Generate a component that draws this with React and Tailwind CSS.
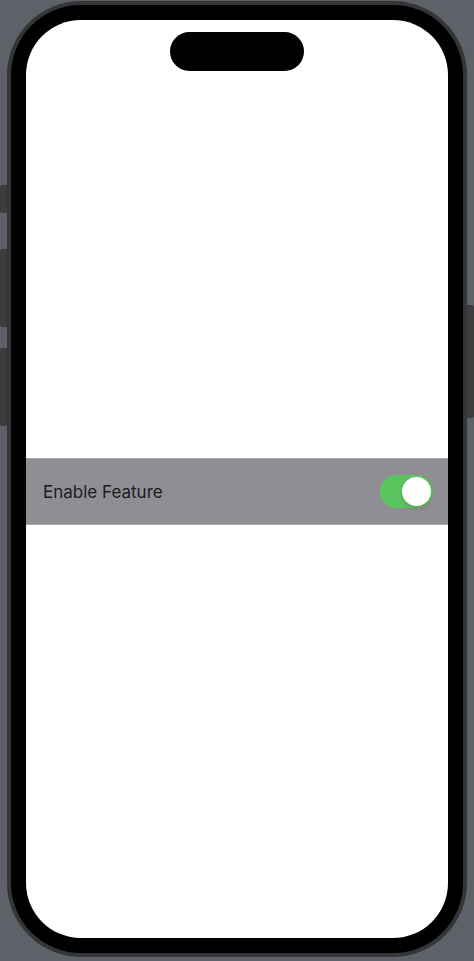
import React, { useState } from 'react';

function Toggle({ on, onChange }) {
  return (
    <button
      onClick={() => onChange(!on)}
      className={`flex h-[33px] w-[53px] items-center rounded-full p-[2px] ${on ? 'justify-end bg-[#5cc45e]' : 'justify-start bg-[#787880]'}`}
    >
      <span className="h-[29px] w-[29px] rounded-full bg-white shadow-[0_2px_4px_rgba(0,0,0,0.15)]" />
    </button>
  );
}

export default function App() {
  const [enabled, setEnabled] = useState(true);

  return (
    <div className="relative h-[961px] w-[474px] overflow-hidden bg-[#5e6268] pl-[7px] pt-[1px]" style={{ fontFamily: 'Inter, "Noto Sans", sans-serif' }}>
      {/* hardware buttons */}
      <div className="absolute left-0 top-[185px] h-[28px] w-[7px] rounded-l-[2px] bg-[#3b3c3e]" />
      <div className="absolute left-0 top-[249px] h-[78px] w-[7px] rounded-l-[2px] bg-[#3b3c3e]" />
      <div className="absolute left-0 top-[348px] h-[78px] w-[7px] rounded-l-[2px] bg-[#3b3c3e]" />
      <div className="absolute right-0 top-[305px] h-[113px] w-[7px] rounded-r-[2px] bg-[#3b3c3e]" />

      {/* device frame */}
      <div className="h-[956px] w-[460px] rounded-[74px] bg-[#343537] p-[4px]">
        <div className="h-full w-full rounded-[70px] bg-black p-[15px]">
          <div className="flex h-full w-full flex-col items-center overflow-hidden rounded-[55px] bg-white">
            <div className="mt-[12px] h-[39px] w-[134px] rounded-full bg-black" />

            <div className="mt-[387px] flex h-[67px] w-full items-center justify-between border-y border-[#a9a9ad] bg-[#8e8e93] pl-[17px] pr-[15px]">
              <span className="mt-[3px] text-[17px] text-[#1c1c1e]">Enable Feature</span>
              <Toggle on={enabled} onChange={setEnabled} />
            </div>
          </div>
        </div>
      </div>
    </div>
  );
}
